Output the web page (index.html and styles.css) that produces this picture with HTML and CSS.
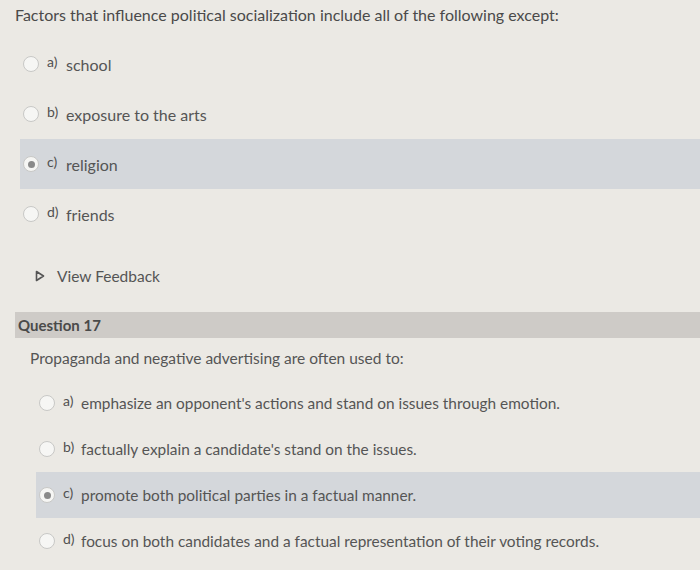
FILE: index.html
```html
<!DOCTYPE html>
<html>
<head>
<meta charset="utf-8">
<link rel="stylesheet" href="styles.css">
</head>
<body>
<div class="page">
  <section class="q q1">
    <p class="prompt">Factors that influence political socialization include all of the following except:</p>
    <div class="opts">
      <div class="opt"><span class="radio"></span><span class="lbl">a)</span><span class="txt">school</span></div>
      <div class="opt"><span class="radio"></span><span class="lbl">b)</span><span class="txt">exposure to the arts</span></div>
      <div class="opt sel"><span class="radio on"></span><span class="lbl">c)</span><span class="txt">religion</span></div>
      <div class="opt"><span class="radio"></span><span class="lbl">d)</span><span class="txt">friends</span></div>
    </div>
    <div class="feedback"><svg class="tri" width="10" height="12" viewBox="0 0 10 12"><path d="M1.5 1.5 L8.5 6 L1.5 10.5 Z" fill="none" stroke="#555" stroke-width="1.6" stroke-linejoin="round"/></svg><span>View Feedback</span></div>
  </section>
  <section class="q q2">
    <div class="qhead">Question 17</div>
    <p class="prompt2">Propaganda and negative advertising are often used to:</p>
    <div class="opts2">
      <div class="opt"><span class="radio"></span><span class="lbl">a)</span><span class="txt">emphasize an opponent's actions and stand on issues through emotion.</span></div>
      <div class="opt"><span class="radio"></span><span class="lbl">b)</span><span class="txt">factually explain a candidate's stand on the issues.</span></div>
      <div class="opt sel"><span class="radio on"></span><span class="lbl">c)</span><span class="txt">promote both political parties in a factual manner.</span></div>
      <div class="opt"><span class="radio"></span><span class="lbl">d)</span><span class="txt">focus on both candidates and a factual representation of their voting records.</span></div>
    </div>
  </section>
</div>
</body>
</html>
```
FILE: styles.css
```css
html, body {
  margin: 0;
  padding: 0;
  background: #ebe9e4;
}
body {
  font-family: Lato, "Open Sans", sans-serif;
  color: #555;
  width: 700px;
  height: 570px;
  overflow: hidden;
}
.page {
  display: flex;
  flex-direction: column;
}
.prompt {
  margin: 0;
  height: 39px;
  padding: 5px 0 0 15px;
  box-sizing: border-box;
  font-size: 16px;
  color: #4a4a4a;
}
.opts {
  display: flex;
  flex-direction: column;
  padding-left: 20px;
}
.opt {
  display: flex;
  align-items: center;
  height: 50px;
  font-size: 16px;
}
.opt.sel {
  background: #d4d7db;
}
.radio {
  width: 14px;
  height: 14px;
  border-radius: 50%;
  border: 1.5px solid #c8c8c6;
  background: #f6f6f4;
  margin-left: 3px;
  flex: none;
  display: flex;
  align-items: center;
  justify-content: center;
}
.radio.on::after {
  content: "";
  width: 7px;
  height: 7px;
  border-radius: 50%;
  background: #8a8a8a;
}
.lbl {
  font-size: 14px;
  margin-left: 8px;
  width: 19px;
  position: relative;
  top: -3px;
  color: #505050;
}
.txt {
  color: #555;
}
.feedback {
  display: flex;
  align-items: center;
  height: 73px;
  padding-left: 35px;
  font-size: 15.5px;
  color: #555;
}
.feedback .tri {
  margin-right: 12px;
}
.qhead {
  margin-left: 15px;
  height: 26px;
  background: #cecbc7;
  display: flex;
  align-items: center;
  padding-left: 3px;
  font-size: 15px;
  font-weight: bold;
  color: #4a4a4a;
}
.prompt2 {
  margin: 0;
  height: 39px;
  display: flex;
  align-items: center;
  padding-left: 30px;
  font-size: 15.5px;
  color: #555;
}
.opts2 {
  display: flex;
  flex-direction: column;
  padding-left: 36px;
  padding-top: 3px;
}
.opts2 .opt {
  height: 46px;
  font-size: 15.4px;
}
.opts2 .radio {
  margin-left: 3px;
}
.opts2 .lbl {
  margin-left: 8px;
  width: 18px;
}
```
